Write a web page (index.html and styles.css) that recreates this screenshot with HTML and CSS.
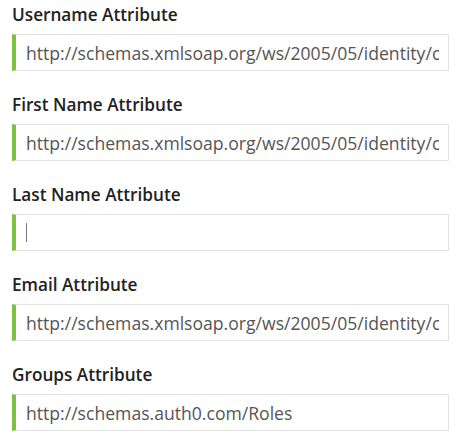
FILE: index.html
```html
<!DOCTYPE html>
<html>
<head>
<meta charset="utf-8">
<link rel="stylesheet" href="styles.css">
</head>
<body>
<div class="form">
  <div class="field">
    <label class="label">Username Attribute</label>
    <div class="input"><span class="value">http://schemas.xmlsoap.org/ws/2005/05/identity/claims/upn</span></div>
  </div>
  <div class="field">
    <label class="label">First Name Attribute</label>
    <div class="input"><span class="value">http://schemas.xmlsoap.org/ws/2005/05/identity/claims/givenname</span></div>
  </div>
  <div class="field">
    <label class="label">Last Name Attribute</label>
    <div class="input"><span class="caret"></span></div>
  </div>
  <div class="field">
    <label class="label">Email Attribute</label>
    <div class="input"><span class="value">http://schemas.xmlsoap.org/ws/2005/05/identity/claims/emailaddress</span></div>
  </div>
  <div class="field">
    <label class="label">Groups Attribute</label>
    <div class="input"><span class="value">http://schemas.auth0.com/Roles</span></div>
  </div>
</div>
</body>
</html>
```
FILE: styles.css
```css
html, body {
  margin: 0;
  padding: 0;
  background: #ffffff;
}
body {
  font-family: "Open Sans", "Noto Sans", sans-serif;
}
.form {
  display: flex;
  flex-direction: column;
  gap: 22px;
  padding: 3px 25px 0 12px;
}
.field {
  display: flex;
  flex-direction: column;
  gap: 7px;
}
.label {
  display: block;
  font-size: 17.2px;
  line-height: 24px;
  font-weight: 600;
  color: #222222;
}
.input {
  box-sizing: border-box;
  height: 37px;
  border: 1px solid #e2e2e2;
  border-left: 4px solid #7cc142;
  padding: 0 9px 0 10px;
  display: flex;
  align-items: center;
  font-size: 17.6px;
  color: #555555;
}
.value {
  flex: 1;
  min-width: 0;
  overflow: hidden;
  white-space: nowrap;
}
.caret {
  display: block;
  width: 1px;
  height: 19px;
  background: #777777;
}
```
